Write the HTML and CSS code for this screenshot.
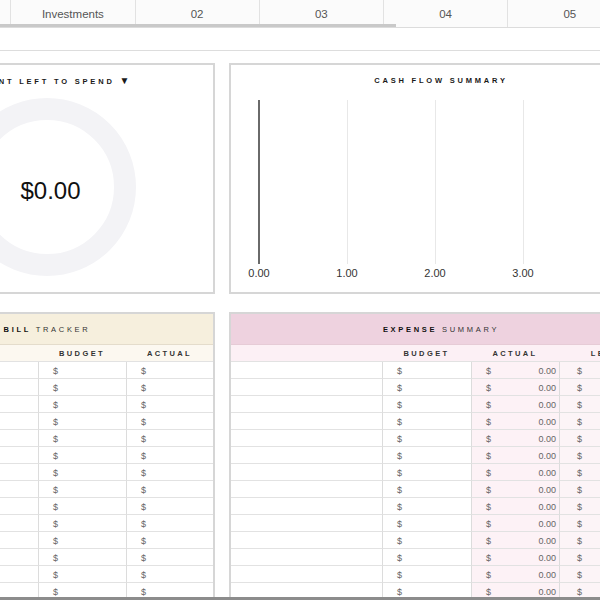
FILE: index.html
```html
<!DOCTYPE html>
<html>
<head>
<meta charset="utf-8">
<link rel="stylesheet" href="styles.css">
</head>
<body>
<div class="topbar">
  <div class="tab"></div>
  <div class="tab">Investments</div>
  <div class="tab">02</div>
  <div class="tab">03</div>
  <div class="tab">04</div>
  <div class="tab">05</div>
  <div class="thumb"></div>
</div>
<div class="band"></div>
<div class="main">
  <section class="card">
    <div class="title">AMOUNT LEFT TO SPEND <span class="caret">&#9660;</span></div>
    <div class="donut"><span class="amount">$0.00</span></div>
  </section>
  <section class="card">
    <div class="title">CASH FLOW SUMMARY</div>
    <div class="chart">
      <div class="tick"><span class="line axis"></span><span class="lbl">0.00</span></div>
      <div class="tick"><span class="line"></span><span class="lbl">1.00</span></div>
      <div class="tick"><span class="line"></span><span class="lbl">2.00</span></div>
      <div class="tick"><span class="line"></span><span class="lbl">3.00</span></div>
      <div class="tick"><span class="line"></span><span class="lbl">4.00</span></div>
    </div>
  </section>
  <section class="card table bill">
    <div class="thead"><b>BILL</b> TRACKER</div>
    <div class="grid bill-grid" id="billgrid">
      <div class="sub"></div><div class="sub c">BUDGET</div><div class="sub c">ACTUAL</div>
    </div>
  </section>
  <section class="card table expense">
    <div class="thead"><b>EXPENSE</b> SUMMARY</div>
    <div class="grid exp-grid" id="expgrid">
      <div class="sub"></div><div class="sub c">BUDGET</div><div class="sub c">ACTUAL</div><div class="sub c">LEFT</div>
    </div>
  </section>
</div>
<div class="hscroll"></div>
<script>
  var b = document.getElementById('billgrid');
  var e = document.getElementById('expgrid');
  var bh = '', eh = '';
  for (var i = 0; i < 15; i++) {
    bh += '<div class="cell"></div><div class="cell">$</div><div class="cell">$</div>';
    eh += '<div class="cell"></div><div class="cell">$</div><div class="cell pink"><span>$</span><span>0.00</span></div><div class="cell pink2">$</div>';
  }
  b.insertAdjacentHTML('beforeend', bh);
  e.insertAdjacentHTML('beforeend', eh);
</script>
</body>
</html>
```
FILE: styles.css
```css
* { box-sizing: border-box; }
html, body { margin: 0; padding: 0; }
body {
  width: 600px;
  height: 600px;
  overflow: hidden;
  background: #fff;
  font-family: "Liberation Sans", Arial, sans-serif;
  color: #222;
}
.topbar {
  position: relative;
  display: flex;
  height: 28px;
  margin-left: -113px;
  background: #fbfbfb;
  border-bottom: 1px solid #dcdcdc;
}
.tab {
  flex: none;
  width: 124.25px;
  border-right: 1px solid #e2e2e2;
  text-align: center;
  line-height: 29px;
  font-size: 11.5px;
  color: #555;
}
.thumb {
  position: absolute;
  left: 113px;
  top: 24px;
  width: 396px;
  height: 3px;
  background: #c9c9c9;
}
.band {
  height: 23px;
  border-bottom: 1px solid #dddddd;
}
.main {
  display: grid;
  grid-template-columns: 336px 424px;
  column-gap: 14px;
  row-gap: 18px;
  margin-left: -121px;
  padding-top: 12px;
}
.card {
  border: 2px solid #d6d6d6;
  height: 231px;
  background: #fff;
}
.title {
  padding-top: 10px;
  text-align: center;
  font-size: 7.5px;
  line-height: 11px;
  font-weight: bold;
  letter-spacing: 2.8px;
  color: #1a1a1a;
}
.caret {
  font-size: 10px;
  letter-spacing: 0;
}
.donut {
  width: 178px;
  height: 178px;
  margin: 11px auto 0;
  border: 22px solid #f3f3f6;
  border-radius: 50%;
  display: flex;
  align-items: center;
  justify-content: center;
}
.amount {
  font-size: 24px;
  color: #111;
  padding-top: 8px;
  padding-left: 7px;
}
.chart {
  display: flex;
  margin-left: -16px;
  margin-top: 14px;
}
.tick {
  flex: none;
  width: 88px;
  display: flex;
  flex-direction: column;
  align-items: center;
}
.line {
  display: block;
  width: 1px;
  height: 164px;
  background: #e8e8e8;
}
.line.axis {
  width: 2px;
  background: #6a6a6a;
}
.lbl {
  margin-top: 3px;
  font-size: 11px;
  line-height: 13px;
  color: #333;
}
.table {
  height: auto;
  border-bottom: none;
}
.thead {
  height: 31px;
  line-height: 31px;
  text-align: center;
  font-size: 7.5px;
  letter-spacing: 2.7px;
  color: #333;
  border-bottom: 1px solid #e4dccb;
}
.thead b { color: #111; }
.bill .thead { background: #f6efdd; }
.expense .thead { background: #eed2df; border-bottom-color: #e6cbd6; }
.grid { display: grid; }
.bill-grid { grid-template-columns: 157px 88px 1fr; }
.exp-grid { grid-template-columns: 151px 89px 88px 1fr; }
.sub {
  height: 17px;
  line-height: 17px;
  border-bottom: 1px solid #e2e2e2;
  font-size: 7.5px;
  font-weight: bold;
  letter-spacing: 2.4px;
  color: #333;
}
.sub.c { text-align: center; }
.bill .sub { background: #fcf8f0; }
.expense .sub { background: #fcf0f5; }
.cell {
  height: 17px;
  line-height: 18px;
  border-bottom: 1px solid #e2e2e2;
  font-size: 9px;
  color: #666;
  padding-left: 14px;
}
.bill-grid .cell:nth-child(3n+2),
.bill-grid .cell:nth-child(3n) { border-left: 1px solid #dcdcdc; }
.exp-grid .cell:nth-child(4n+2),
.exp-grid .cell:nth-child(4n+3),
.exp-grid .cell:nth-child(4n) { border-left: 1px solid #dcdcdc; }
.cell.pink {
  background: #fdf2f6;
  display: flex;
  justify-content: space-between;
  padding-right: 3px;
}
.cell.pink2 {
  background: #fcf4f7;
  padding-left: 17px;
}
.hscroll {
  position: fixed;
  left: 0;
  bottom: 0;
  width: 600px;
  height: 3px;
  background: #8c8c8c;
}
```
